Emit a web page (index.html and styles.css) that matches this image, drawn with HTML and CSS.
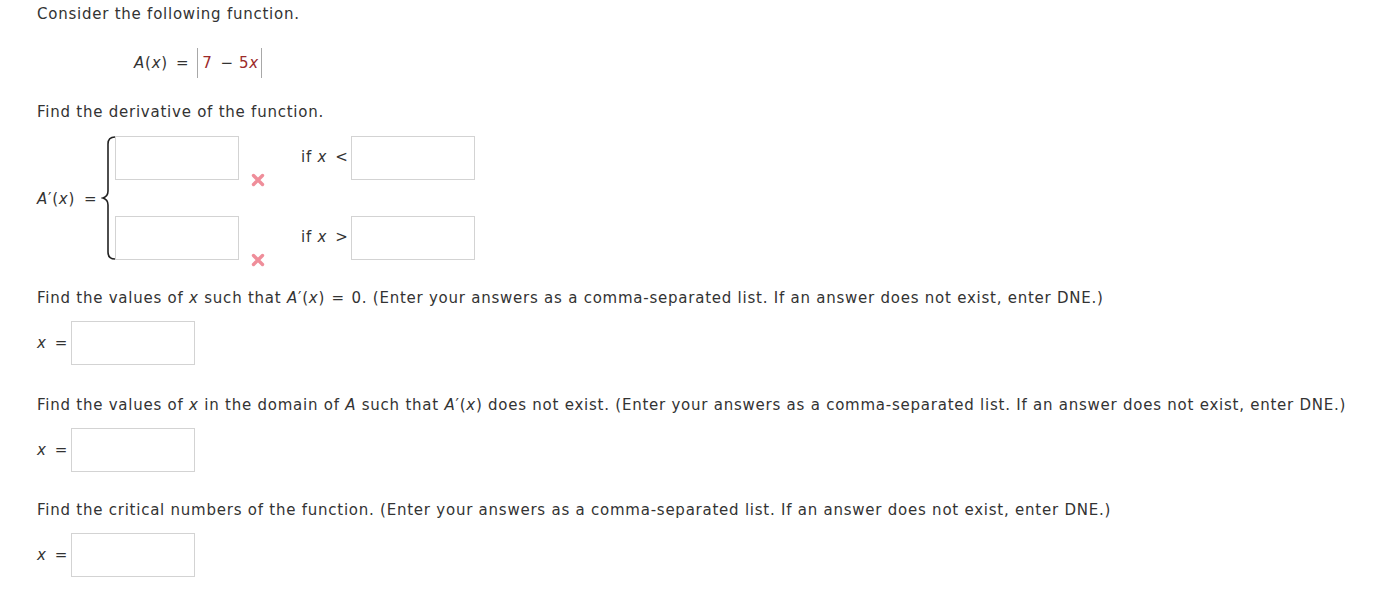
FILE: index.html
```html
<!DOCTYPE html>
<html>
<head>
<meta charset="utf-8">
<link rel="stylesheet" href="styles.css">
</head>
<body>
<div class="page">
  <p class="line l1">Consider the following function.</p>
  <div class="formula">
    <span><span class="m">A</span>(<span class="m">x</span>)</span><span class="eq">=</span><span class="abs"><span class="red">7</span><span class="minus">−</span><span class="red">5<span class="m">x</span></span></span>
  </div>
  <p class="line l2">Find the derivative of the function.</p>
  <div class="piece">
    <div class="plabel"><span class="m">A</span>′(<span class="m">x</span>)<span class="eq2">=</span></div>
    <svg class="brace" width="14" height="124" viewBox="0 0 14 124"><path d="M14 1 C9 1 7 3 7 8 L7 55 C7 59 5 61 2 62 C5 63 7 65 7 69 L7 116 C7 121 9 123 14 123" fill="none" stroke="#222" stroke-width="1.6"/></svg>
    <div class="rows">
      <div class="prow">
        <div class="box"></div>
        <div class="mark"><svg width="14" height="14" viewBox="0 0 14 14"><path d="M2.5 2.5 L11.5 11.5 M11.5 2.5 L2.5 11.5" stroke="#ef8e9a" stroke-width="3.4" stroke-linecap="round"/></svg></div>
        <div class="cond">if <span class="m">x</span><span class="op">&lt;</span></div>
        <div class="box"></div>
      </div>
      <div class="prow">
        <div class="box"></div>
        <div class="mark"><svg width="14" height="14" viewBox="0 0 14 14"><path d="M2.5 2.5 L11.5 11.5 M11.5 2.5 L2.5 11.5" stroke="#ef8e9a" stroke-width="3.4" stroke-linecap="round"/></svg></div>
        <div class="cond">if <span class="m">x</span><span class="op">&gt;</span></div>
        <div class="box"></div>
      </div>
    </div>
  </div>
  <p class="line l3">Find the values of <span class="m">x</span> such that <span class="m">A</span>′(<span class="m">x</span>) <span class="eq3">=</span> 0. (Enter your answers as a comma-separated list. If an answer does not exist, enter DNE.)</p>
  <div class="ans a1"><span class="xl"><span class="m">x</span><span class="eq4">=</span></span><div class="box"></div></div>
  <p class="line l4">Find the values of <span class="m">x</span> in the domain of <span class="m">A</span> such that <span class="m">A</span>′(<span class="m">x</span>) does not exist. (Enter your answers as a comma-separated list. If an answer does not exist, enter DNE.)</p>
  <div class="ans a2"><span class="xl"><span class="m">x</span><span class="eq4">=</span></span><div class="box"></div></div>
  <p class="line l5">Find the critical numbers of the function. (Enter your answers as a comma-separated list. If an answer does not exist, enter DNE.)</p>
  <div class="ans a3"><span class="xl"><span class="m">x</span><span class="eq4">=</span></span><div class="box"></div></div>
</div>
</body>
</html>
```
FILE: styles.css
```css
html, body { margin: 0; padding: 0; background: #fff; }
body {
  font-family: "DejaVu Sans", Verdana, sans-serif;
  font-size: 15px;
  letter-spacing: 0.76px;
  color: #333;
}
.page { padding-left: 37px; }
.line { margin: 0; line-height: 18px; height: 18px; white-space: nowrap; }
.m { font-style: italic; }
.red { color: #9c2a2a; }
.l1 { padding-top: 5px; }
.formula {
  margin-top: 25px;
  margin-left: 97px;
  height: 30px;
  display: flex;
  align-items: center;
  white-space: nowrap;
}
.eq { margin: 0 8px 0 8px; }
.abs {
  display: inline-flex;
  align-items: center;
  height: 30px;
  border-left: 1px solid #a8a8a8;
  border-right: 1px solid #a8a8a8;
  padding: 0 2px 0 4px;
}
.minus { margin: 0 5px 0 8px; }
.l2 { margin-top: 25px; }
.piece {
  margin-top: 15px;
  display: flex;
  align-items: center;
  height: 131px;
}
.plabel { width: 64px; white-space: nowrap; margin-top: -6px; }
.eq2 { margin-left: 9px; }
.brace { align-self: flex-start; }
.rows { align-self: flex-start; display: flex; flex-direction: column; gap: 36px; }
.prow { display: flex; align-items: center; height: 44px; }
.box {
  width: 122px;
  height: 42px;
  border: 1px solid #d3d3d3;
  background: #fff;
  flex: none;
}
.mark {
  width: 62px;
  align-self: flex-end;
  margin-bottom: -7px;
  display: flex;
  padding-left: 12px;
  box-sizing: border-box;
  height: 14px;
}
.cond { width: 50px; white-space: nowrap; margin-top: -2px; }
.op { margin-left: 8px; }
.eq3 { margin: 0 1px; }
.l3 { margin-top: 22px; }
.ans { display: flex; align-items: center; height: 44px; }
.xl { width: 34px; white-space: nowrap; }
.eq4 { margin-left: 8px; }
.a1 { margin-top: 14px; }
.l4 { margin-top: 31px; }
.a2 { margin-top: 14px; }
.l5 { margin-top: 29px; }
.a3 { margin-top: 14px; }
```
